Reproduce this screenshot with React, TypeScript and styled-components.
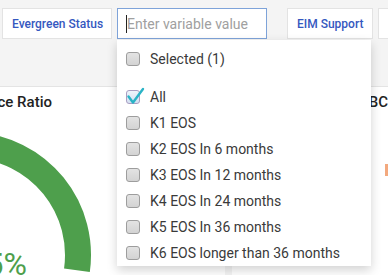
import styled, { createGlobalStyle } from "styled-components";

const GlobalStyle = createGlobalStyle`
  html, body { margin: 0; padding: 0; }
  body {
    background: #f4f4f4;
    font-family: Roboto, "Liberation Sans", Arial, sans-serif;
    overflow: hidden;
  }
`;

const Page = styled.div`
  width: 388px;
  height: 275px;
  overflow: hidden;
  background: #f4f4f4;
`;

const Toolbar = styled.div`
  display: flex;
  align-items: flex-start;
  gap: 5px;
  padding: 8px 0 0 2px;
  height: 31px;
  white-space: nowrap;
`;

const FilterButton = styled.button<{ $width: number; $tone?: "blue" | "orange" }>`
  flex: none;
  box-sizing: border-box;
  width: ${({ $width }) => $width}px;
  height: 31px;
  padding: 0 9px;
  border: 1px solid #e3e3e3;
  background: #fff;
  font-family: Roboto, sans-serif;
  font-size: 12px;
  font-weight: 500;
  text-align: left;
  color: ${({ $tone }) => ($tone === "orange" ? "#f0a040" : "#3558c0")};
`;

const SearchWrap = styled.div`
  position: relative;
  flex: none;
  width: 150px;
  margin-right: 15px;
`;

const SearchInput = styled.input`
  box-sizing: border-box;
  width: 150px;
  height: 31px;
  border: 1px solid #7ea3d9;
  padding: 0 9px;
  font: 14px Roboto, sans-serif;
  color: #333;
  caret-color: transparent;
  outline: none;
  &::placeholder {
    color: #a0a0a0;
  }
`;

const Caret = styled.span`
  position: absolute;
  left: 9px;
  top: 7px;
  width: 1px;
  height: 18px;
  background: #222;
`;

const Dropdown = styled.div`
  position: absolute;
  top: 32px;
  left: 0;
  width: 254px;
  padding-top: 6px;
  background: #fff;
  box-shadow: 0 4px 10px rgba(0, 0, 0, 0.18);
  z-index: 10;
`;

const OptionRow = styled.div`
  display: flex;
  align-items: center;
  gap: 10px;
  height: 26px;
  padding-left: 9px;
  font-size: 14px;
  color: #3a3a3a;
  white-space: nowrap;
`;

const Separator = styled.div`
  height: 12px;
`;

const Box = styled.span<{ $checked: boolean }>`
  position: relative;
  flex: none;
  box-sizing: border-box;
  width: 14px;
  height: 14px;
  border: 1px solid ${({ $checked }) => ($checked ? "#a99ec2" : "#9d9d9d")};
  border-radius: 3px;
  background: ${({ $checked }) =>
    $checked ? "linear-gradient(#eef4fb, #d3dff0)" : "linear-gradient(#e3e3e3, #d3d3d3)"};
`;

const Tick = styled.svg`
  position: absolute;
  left: -1px;
  top: -1px;
  overflow: visible;
`;

const Panels = styled.div`
  display: flex;
  gap: 7px;
  margin: 47px 0 0 -290px;
`;

const Panel = styled.div<{ $width: number }>`
  flex: none;
  width: ${({ $width }) => $width}px;
  height: 200px;
  background: #fff;
  border-top: 1px solid #e4e4e4;
  overflow: hidden;
`;

const PanelTitle = styled.div<{ $center?: boolean }>`
  padding: ${({ $center }) => ($center ? "6px 30px 0 10px" : "6px 10px 0")};
  height: 18px;
  font-size: 15px;
  font-weight: 500;
  color: #222;
  white-space: nowrap;
  text-align: ${({ $center }) => ($center ? "center" : "left")};
`;

const Chart = styled.svg`
  display: block;
`;

function Checkbox({ checked }: { checked?: boolean }) {
  return (
    <Box $checked={!!checked}>
      {checked && (
        <Tick width="14" height="14" viewBox="0 0 14 14">
          <path
            d="M2.5 6.5 L7 12.5 L17 -1"
            fill="none"
            stroke="#2ab3c6"
            strokeWidth="2.4"
            strokeLinecap="round"
            strokeLinejoin="round"
          />
        </Tick>
      )}
    </Box>
  );
}

const options = [
  "K1 EOS",
  "K2 EOS In 6 months",
  "K3 EOS In 12 months",
  "K4 EOS In 24 months",
  "K5 EOS In 36 months",
  "K6 EOS longer than 36 months",
];

function Gauge() {
  const cx = 258;
  const cy = 144;
  const r = 110;
  const end = (8 * Math.PI) / 180;
  const ex = cx + r * Math.cos(end);
  const ey = cy + r * Math.sin(end);
  return (
    <Chart width="515" height="180">
      <path
        d={`M ${cx - r} ${cy} A ${r} ${r} 0 1 1 ${ex} ${ey}`}
        fill="none"
        stroke="#4e9f4c"
        strokeWidth="26"
      />
      <text
        x="317"
        y="164"
        textAnchor="end"
        fontFamily="Roboto, sans-serif"
        fontSize="32"
        fill="#4e9f4c"
      >
        95%
      </text>
    </Chart>
  );
}

export default function App() {
  return (
    <Page>
      <GlobalStyle />
      <Toolbar>
        <FilterButton $width={110}>Evergreen Status</FilterButton>
        <SearchWrap>
          <SearchInput placeholder="Enter variable value" />
          <Caret />
          <Dropdown>
            <OptionRow>
              <Checkbox />
              Selected (1)
            </OptionRow>
            <Separator />
            <OptionRow>
              <Checkbox checked />
              All
            </OptionRow>
            {options.map((o) => (
              <OptionRow key={o}>
                <Checkbox />
                {o}
              </OptionRow>
            ))}
          </Dropdown>
        </SearchWrap>
        <FilterButton $width={86}>EIM Support</FilterButton>
        <FilterButton $width={90} $tone="orange">
          — Key
        </FilterButton>
      </Toolbar>
      <Panels>
        <Panel $width={515}>
          <PanelTitle $center>Evergreen Compliance Ratio</PanelTitle>
          <Gauge />
        </Panel>
        <Panel $width={300}>
          <PanelTitle>Evergreen Status SBC</PanelTitle>
          <Chart width="300" height="150">
            <rect x="153" y="53" width="12" height="12" fill="#f3a97e" />
          </Chart>
        </Panel>
      </Panels>
    </Page>
  );
}
